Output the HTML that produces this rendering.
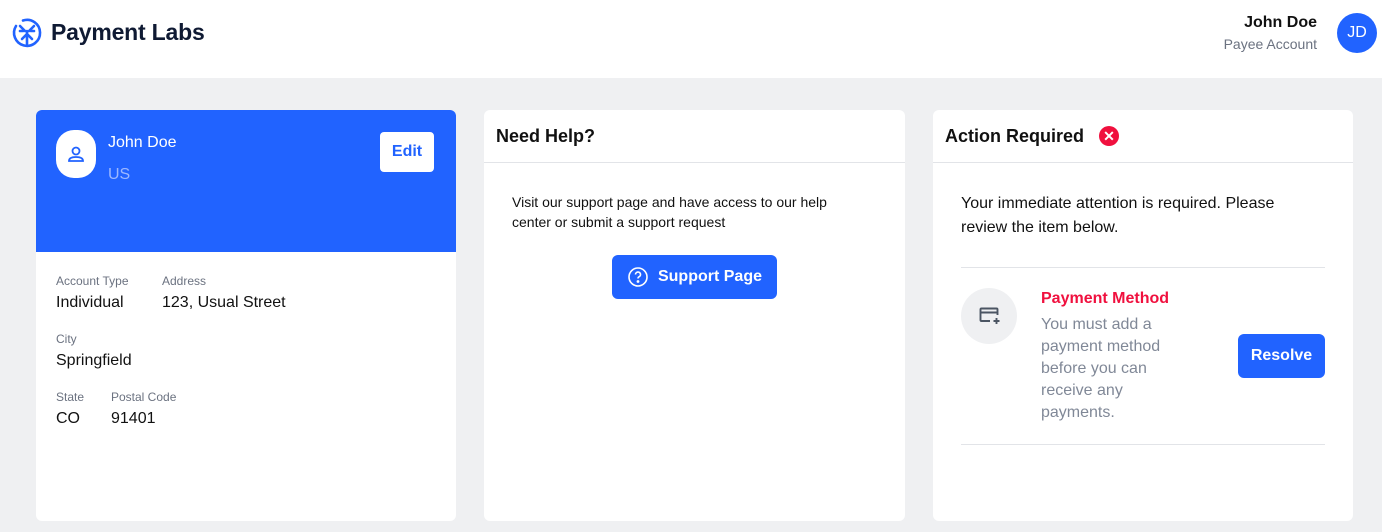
<!DOCTYPE html>
<html><head><style>
*{box-sizing:border-box;margin:0;padding:0}
body{width:1382px;height:532px;background:#eff0f2;font-family:"Liberation Sans",sans-serif;color:#111;position:relative;overflow:hidden}
.hdr{position:absolute;left:0;top:0;width:1382px;height:78px;background:#fff}
.card{position:absolute;top:110px;height:411px;background:#fff;border-radius:6px;overflow:hidden}
.abs{position:absolute}
.lbl{font-size:12px;color:#6b7280}
.val{font-size:16px;color:#111}
.btn{position:absolute;background:#2163ff;color:#fff;font-weight:bold;border-radius:6px;display:flex;align-items:center;justify-content:center}
</style></head><body>
<div class="hdr">
<svg class="abs" style="left:11px;top:17px" width="32" height="32" viewBox="0 0 32 32" fill="none" stroke="#2163ff" stroke-width="2.6" stroke-linecap="round"><path d="M5 9A13 13 0 1 0 12 3.5"/><path d="M9 9l5 5M23 9l-5 5M16 14v13M11 22l5-5 5 5M9 14h3M20 14h3"/></svg>
<div class="abs" style="left:51px;top:19px;font-size:23px;font-weight:bold;color:#0f1a33;letter-spacing:-0.2px">Payment Labs</div>
<div class="abs" style="right:65px;top:14px;font-size:16px;font-weight:bold;text-align:right">John Doe</div>
<div class="abs" style="right:65px;top:36px;font-size:14px;color:#6b7280">Payee Account</div>
<div class="abs" style="left:1337px;top:13px;width:40px;height:40px;border-radius:50%;background:#2163ff;color:#fff;font-size:16px;display:flex;align-items:center;justify-content:center">JD</div>
</div>

<div class="card" style="left:36px;width:420px">
<div class="abs" style="left:0;top:0;width:420px;height:142px;background:#2163ff"></div>
<div class="abs" style="left:20px;top:20px;width:40px;height:48px;border-radius:18px;background:#fff"></div>
<svg class="abs" style="left:30px;top:34px" width="20" height="20" viewBox="0 0 20 20" fill="none" stroke="#2163ff" stroke-width="1.8"><circle cx="10" cy="7" r="3.5"/><path d="M3 17c0-3 3-4 7-4s7 1 7 4z"/></svg>
<div class="abs" style="left:72px;top:24px;font-size:16px;color:#fff">John Doe</div>
<div class="abs" style="left:72px;top:56px;font-size:16px;color:#9db8ff">US</div>
<div class="abs" style="left:344px;top:22px;width:54px;height:40px;background:#fff;border-radius:4px;color:#2163ff;font-weight:bold;font-size:16px;display:flex;align-items:center;justify-content:center">Edit</div>
<div class="abs lbl" style="left:20px;top:164px">Account Type</div>
<div class="abs val" style="left:20px;top:184px">Individual</div>
<div class="abs lbl" style="left:126px;top:164px">Address</div>
<div class="abs val" style="left:126px;top:184px">123, Usual Street</div>
<div class="abs lbl" style="left:20px;top:222px">City</div>
<div class="abs val" style="left:20px;top:242px">Springfield</div>
<div class="abs lbl" style="left:20px;top:280px">State</div>
<div class="abs val" style="left:20px;top:300px">CO</div>
<div class="abs lbl" style="left:75px;top:280px">Postal Code</div>
<div class="abs val" style="left:75px;top:300px">91401</div>
</div>

<div class="card" style="left:484px;width:421px">
<div class="abs" style="left:12px;top:16px;font-size:18px;font-weight:bold">Need Help?</div>
<div class="abs" style="left:0;top:52px;width:421px;height:1px;background:#e2e4e8"></div>
<div class="abs" style="left:28px;top:82px;width:356px;font-size:14px;line-height:20px">Visit our support page and have access to our help center or submit a support request</div>
<div class="btn" style="left:128px;top:145px;width:165px;height:44px;font-size:16px"><svg width="22" height="22" viewBox="0 0 22 22" fill="none" stroke="#fff" stroke-width="1.6" style="margin-right:9px"><circle cx="11" cy="11" r="9"/><path d="M8.5 8.5a2.5 2.5 0 1 1 3.5 2.3c-.8.4-1 .9-1 1.7"/><circle cx="11" cy="15.5" r=".6" fill="#fff"/></svg>Support Page</div>
</div>

<div class="card" style="left:933px;width:420px">
<div class="abs" style="left:12px;top:16px;font-size:18px;font-weight:bold">Action Required</div>
<div class="abs" style="left:166px;top:16px;width:20px;height:20px;border-radius:50%;background:#f0103e;color:#fff;font-size:14px;font-weight:bold;display:flex;align-items:center;justify-content:center">✕</div>
<div class="abs" style="left:0;top:52px;width:420px;height:1px;background:#e2e4e8"></div>
<div class="abs" style="left:28px;top:82px;width:360px;font-size:16px;line-height:24px">Your immediate attention is required. Please review the item below.</div>
<div class="abs" style="left:28px;top:157px;width:364px;height:1px;background:#e2e4e8"></div>
<div class="abs" style="left:28px;top:178px;width:56px;height:56px;border-radius:50%;background:#eff0f2"></div>
<svg class="abs" style="left:45px;top:196px" width="24" height="20" viewBox="0 0 24 20" fill="none" stroke="#4b5563" stroke-width="1.9"><path d="M12 15H3.5a1 1 0 0 1-1-1V3.5a1 1 0 0 1 1-1h15a1 1 0 0 1 1 1V9M2.5 6.5h17"/><path d="M18.5 12v6M15.5 15h6"/></svg>
<div class="abs" style="left:108px;top:180px;font-size:16px;font-weight:bold;color:#f0103e">Payment Method</div>
<div class="abs" style="left:108px;top:204px;width:150px;font-size:16px;line-height:22px;color:#808897">You must add a payment method before you can receive any payments.</div>
<div class="btn" style="left:305px;top:224px;width:87px;height:44px;font-size:16px">Resolve</div>
<div class="abs" style="left:28px;top:334px;width:364px;height:1px;background:#e2e4e8"></div>
</div>
</body></html>
